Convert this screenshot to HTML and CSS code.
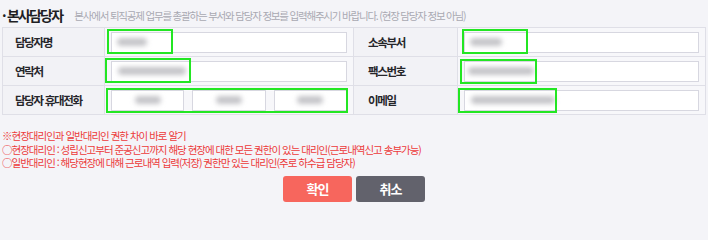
FILE: index.html
```html
<!DOCTYPE html>
<html lang="ko">
<head>
<meta charset="utf-8">
<title>본사담당자</title>
<link rel="stylesheet" href="styles.css">
</head>
<body>
<div class="page">
  <div class="head">
    <h2 class="title">· 본사담당자</h2>
    <p class="desc">본사에서 퇴직공제 업무를 총괄하는 부서와 담당자 정보를 입력해주시기 바랍니다. (현장 담당자 정보 아님)</p>
  </div>

  <div class="form">
    <div class="lbl">담당자명</div>
    <div class="val">
      <span class="field"><i class="blob b-name"></i></span>
      <span class="mark m-l1"></span>
    </div>
    <div class="lbl lbl-r">소속부서</div>
    <div class="val">
      <span class="field"><i class="blob b-dept"></i></span>
      <span class="mark m-r1"></span>
    </div>

    <div class="lbl">연락처</div>
    <div class="val">
      <span class="field"><i class="blob b-tel"></i></span>
      <span class="mark m-l2"></span>
    </div>
    <div class="lbl lbl-r">팩스번호</div>
    <div class="val">
      <span class="field"><i class="blob b-fax"></i></span>
      <span class="mark m-r2"></span>
    </div>

    <div class="lbl">담당자 휴대전화</div>
    <div class="val">
      <span class="field center"><i class="blob b-ph"></i></span>
      <span class="field center"><i class="blob b-ph"></i></span>
      <span class="field center"><i class="blob b-ph"></i></span>
      <span class="mark m-l3"></span>
    </div>
    <div class="lbl lbl-r">이메일</div>
    <div class="val">
      <span class="field"><i class="blob b-mail"></i></span>
      <span class="mark m-r3"></span>
    </div>
  </div>

  <div class="notice">
    <p>※현장대리인과 일반대리인 권한 차이 바로 알기</p>
    <p>○현장대리인 : 성립신고부터 준공신고까지 해당 현장에 대한 모든 권한이 있는 대리인(근로내역신고 송부가능)</p>
    <p>○일반대리인 : 해당현장에 대해 근로내역 입력(저장) 권한만 있는 대리인(주로 하수급 담당자)</p>
  </div>

  <div class="btns">
    <button class="btn ok" type="button">확인</button>
    <button class="btn cancel" type="button">취소</button>
  </div>
</div>
</body>
</html>
```

FILE: styles.css
```css
html, body {
  margin: 0;
  background: #f4f4f8;
  font-family: "Noto Sans CJK KR", "Noto Sans", sans-serif;
}

.page {
  padding: 0 2px;
}

.head {
  height: 27px;
  box-sizing: border-box;
  padding-top: 3px;
  display: flex;
  align-items: center;
}

.title {
  margin: 0;
  font-size: 14px;
  font-weight: 700;
  letter-spacing: -1.8px;
  color: #1f1f24;
  white-space: nowrap;
}

.desc {
  margin: 0 0 0 12px;
  font-size: 10.5px;
  letter-spacing: -1.2px;
  color: #a9a9b2;
  white-space: nowrap;
}

.form {
  width: 704px;
  box-sizing: border-box;
  display: grid;
  grid-template-columns: 101px 248px 103px 1fr;
  grid-auto-rows: 28px;
  gap: 1px;
  background: #dfdfe7;
  border: 1px solid #dfdfe7;
}

.lbl {
  background: #f2f2f6;
  display: flex;
  align-items: center;
  padding-left: 12px;
  font-size: 11.5px;
  font-weight: 700;
  letter-spacing: -1.3px;
  color: #26262b;
  white-space: nowrap;
}

.lbl-r {
  padding-left: 14px;
}

.val {
  position: relative;
  background: #f7f7fa;
  display: flex;
  align-items: center;
  gap: 8px;
  padding: 0 6px;
}

.field {
  flex: 1;
  height: 21px;
  box-sizing: border-box;
  background: #fff;
  border: 1px solid #d7d7e0;
  display: flex;
  align-items: center;
  overflow: hidden;
}

.field.center {
  justify-content: center;
}

.blob {
  display: block;
  height: 8px;
  background: #c4c4c8;
  border-radius: 4px;
  filter: blur(2.5px);
}

.b-name { width: 30px; margin-left: 5px; }
.b-tel  { width: 68px; margin-left: 6px; }
.b-ph   { width: 26px; }
.b-dept { width: 32px; margin-left: 5px; }
.b-fax  { width: 66px; margin-left: 3px; }
.b-mail { width: 84px; margin-left: 6px; }

.mark {
  position: absolute;
  height: 25px;
  box-sizing: border-box;
  border: 2px solid #23e623;
}

.m-l1 { left: 2px; top: 1px; width: 66px; }
.m-l2 { left: 0; top: 1px; width: 86px; }
.m-l3 { left: 1px; top: 2px; width: 242px; }
.m-r1 { left: 4px; top: 1px; width: 66px; }
.m-r2 { left: 2px; top: 2px; width: 77px; }
.m-r3 { left: 0; top: 2px; width: 99px; }

.notice {
  margin-top: 14px;
  font-size: 10.5px;
  line-height: 13.5px;
  letter-spacing: -1px;
  color: #ec3a3a;
}

.notice p {
  margin: 0;
  white-space: nowrap;
}

.btns {
  margin-top: 6px;
  display: flex;
  justify-content: center;
  gap: 4px;
}

.btn {
  width: 69px;
  height: 26px;
  border: none;
  border-radius: 3px;
  font-family: inherit;
  font-size: 13px;
  font-weight: 700;
  letter-spacing: -1px;
  color: #fff;
  padding: 0;
}

.ok { background: #f7665d; }
.cancel { background: #62626c; }
```
